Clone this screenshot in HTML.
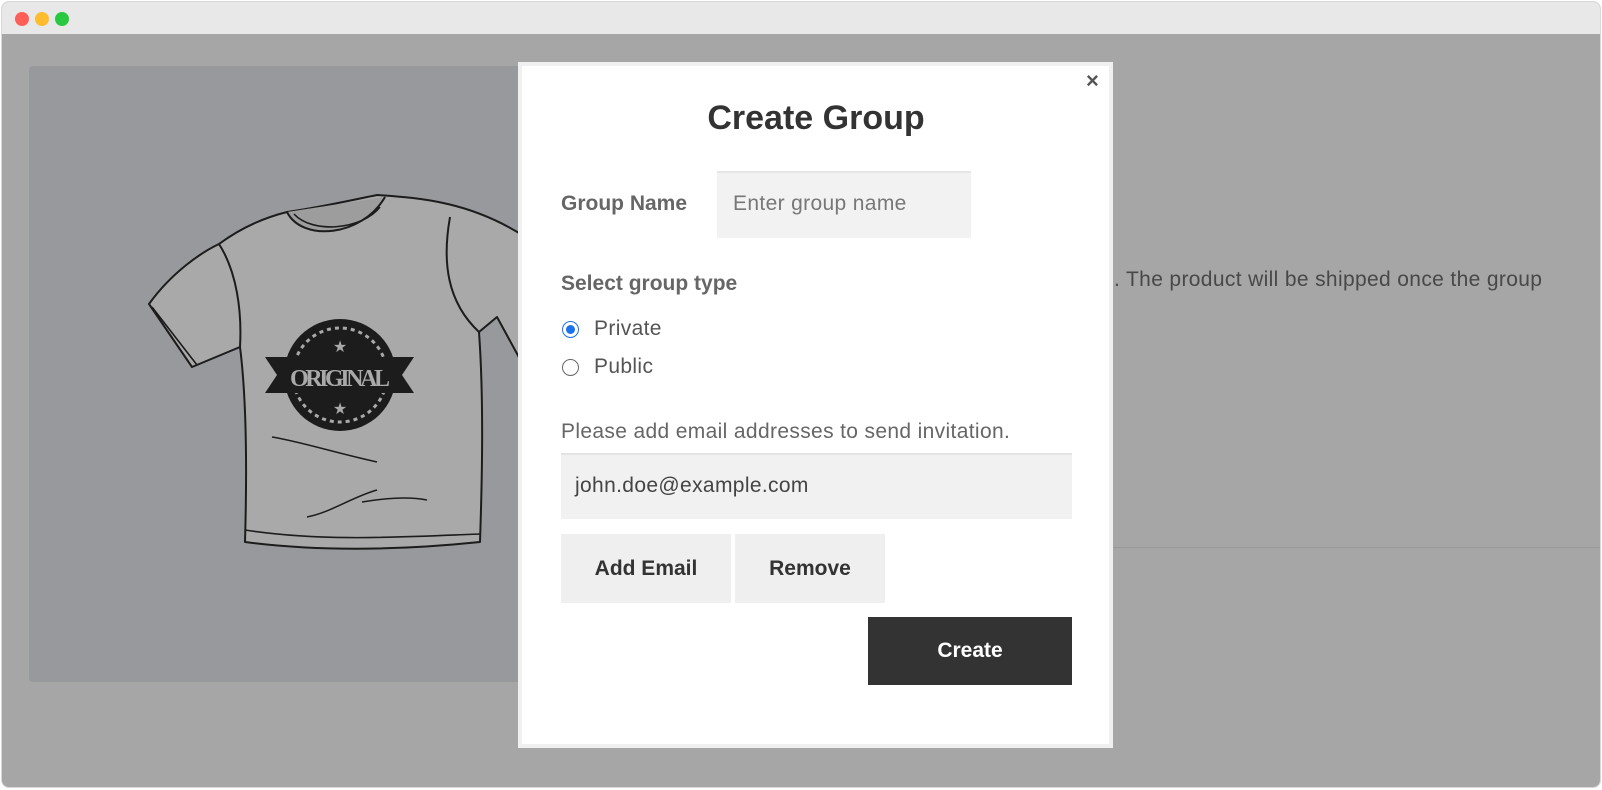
<!DOCTYPE html>
<html><head><meta charset="utf-8"><style>
*{margin:0;padding:0;box-sizing:border-box}
html,body{width:1602px;height:790px;overflow:hidden;background:#fff;font-family:"Liberation Sans",sans-serif}
.win{position:absolute;left:1px;top:1px;width:1600px;height:787px;border-radius:8px;overflow:hidden;background:#a6a6a6;border:1px solid #d8d8d8}
.bar{position:absolute;left:0;top:0;width:100%;height:32px;background:#e8e8e8}
.dot{position:absolute;top:10px;width:14px;height:14px;border-radius:50%}
.card{position:absolute;left:27px;top:64px;width:500px;height:616px;background:#98999d;border-radius:4px}
.line{position:absolute;left:1110px;top:545px;width:500px;height:1px;background:#999}
.rt{position:absolute;left:1112px;top:266px;font-size:21px;color:#484848;white-space:nowrap;letter-spacing:0.35px}
.modal{position:absolute;left:518px;top:62px;width:595px;height:686px;background:#fff;border:4px solid #f0f0f0}
.a{position:absolute;white-space:nowrap}
.t{font-size:21px;letter-spacing:0.35px}
</style></head><body>
<div class="win">
<div class="bar"></div>
<div class="dot" style="left:13px;background:#fe5f57"></div>
<div class="dot" style="left:33px;background:#febc2e"></div>
<div class="dot" style="left:53px;background:#28c840"></div>
<div class="card">
<svg width="500" height="616" viewBox="27 64 500 616" style="position:absolute;left:0;top:0">
<path d="M375,193 C420,196 470,200 525,236 L525,370 L495,315 L477,330 C482,400 480,480 478,540 C400,548 320,550 243,540 C245,470 245,400 238,345 L190,365 L147,302 C170,270 200,250 217,242 C240,225 265,215 285,210 C320,205 350,198 375,193 Z" fill="#a9a9a9" stroke="#1c1c1c" stroke-width="2" stroke-linejoin="round"/>
<path d="M285,210 C300,240 360,235 383,195" fill="#9d9d9d" stroke="#1c1c1c" stroke-width="2"/>
<path d="M292,212 C310,232 360,228 378,205" fill="none" stroke="#1c1c1c" stroke-width="1.6"/>
<path d="M217,242 C235,270 240,310 238,345" fill="none" stroke="#1c1c1c" stroke-width="2"/>
<path d="M448,215 C440,260 445,300 477,330" fill="none" stroke="#1c1c1c" stroke-width="2"/>
<path d="M150,305 L195,363" fill="none" stroke="#1c1c1c" stroke-width="1.6"/>
<path d="M243,528 C320,540 400,535 478,532" fill="none" stroke="#1c1c1c" stroke-width="1.6"/>
<path d="M270,435 C300,440 330,450 375,460 M305,515 C330,510 350,495 375,488 M360,500 C390,495 410,495 425,498" fill="none" stroke="#1c1c1c" stroke-width="1.5"/>
<circle cx="338" cy="373" r="56" fill="#1c1c1c"/>
<circle cx="338" cy="373" r="47" fill="none" stroke="#a9a9a9" stroke-width="3" stroke-dasharray="4 4"/>
<path d="M263,355 L412,355 L400,373 L412,391 L263,391 L275,373 Z" fill="#1c1c1c"/>
<text x="338" y="384" text-anchor="middle" font-family="Liberation Serif" font-weight="bold" font-size="24" fill="#a9a9a9" textLength="100">ORIGINAL</text>
<text x="338" y="350" text-anchor="middle" font-size="16" fill="#a9a9a9">★</text>
<text x="338" y="412" text-anchor="middle" font-size="16" fill="#a9a9a9">★</text>
</svg>
</div>
<div class="line"></div>
<div class="rt">. The product will be shipped once the group</div>
</div>
<div class="modal"></div>
<div class="a" style="left:1086px;top:68px;font-size:22px;font-weight:bold;color:#555">×</div>
<div class="a" style="left:0;width:1632px;text-align:center;top:99px;font-size:34px;font-weight:bold;color:#333">Create Group</div>
<div class="a t" style="left:561px;top:192px;font-weight:bold;color:#666;letter-spacing:0">Group Name</div>
<div class="a" style="left:717px;top:171px;width:254px;height:67px;background:#f2f2f2;border-top:2px solid #e6e6e6"></div>
<div class="a t" style="left:733px;top:192px;color:#777">Enter group name</div>
<div class="a t" style="left:561px;top:272px;font-weight:bold;color:#666;letter-spacing:0">Select group type</div>
<div class="a" style="left:562px;top:321px;width:17px;height:17px;border-radius:50%;border:1.5px solid #1a73e8;background:#fff"><div style="position:absolute;left:2.5px;top:2.5px;width:9px;height:9px;border-radius:50%;background:#1a73e8"></div></div>
<div class="a t" style="left:594px;top:317px;color:#555">Private</div>
<div class="a" style="left:562px;top:359px;width:17px;height:17px;border-radius:50%;border:1.5px solid #666;background:#fff"></div>
<div class="a t" style="left:594px;top:355px;color:#555">Public</div>
<div class="a t" style="left:561px;top:420px;color:#666">Please add email addresses to send invitation.</div>
<div class="a" style="left:561px;top:453px;width:511px;height:66px;background:#f1f1f1;border-top:2px solid #e4e4e4"></div>
<div class="a t" style="left:575px;top:474px;color:#444">john.doe@example.com</div>
<div class="a t" style="left:561px;top:534px;width:170px;height:69px;background:#efefef;text-align:center;line-height:69px;font-weight:bold;color:#333;letter-spacing:0">Add Email</div>
<div class="a t" style="left:735px;top:534px;width:150px;height:69px;background:#efefef;text-align:center;line-height:69px;font-weight:bold;color:#333;letter-spacing:0">Remove</div>
<div class="a t" style="left:868px;top:617px;width:204px;height:68px;background:#333;text-align:center;line-height:68px;font-weight:bold;color:#fff;letter-spacing:0">Create</div>
</body></html>
